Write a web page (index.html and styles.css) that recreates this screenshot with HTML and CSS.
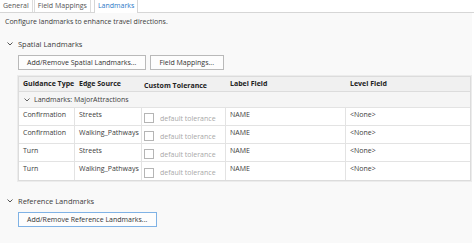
FILE: index.html
```html
<!DOCTYPE html>
<html>
<head>
<meta charset="utf-8">
<link rel="stylesheet" href="styles.css">
</head>
<body>
<div class="tabs">
  <div class="tab">General</div>
  <div class="tab">Field Mappings</div>
  <div class="tab active">Landmarks</div>
</div>
<div class="panel">
  <div class="desc">Configure landmarks to enhance travel directions.</div>
  <div class="section-head">
    <svg class="chev" width="6" height="4" viewBox="0 0 6 4"><polyline points="0.5,0.5 3,3 5.5,0.5" fill="none" stroke="#555" stroke-width="1"/></svg>
    <span>Spatial Landmarks</span>
  </div>
  <div class="btn-row">
    <div class="btn">Add/Remove Spatial Landmarks...</div>
    <div class="btn">Field Mappings...</div>
  </div>
  <div class="table">
    <div class="row head">
      <div class="c c1">Guidance Type</div>
      <div class="c c2">Edge Source</div>
      <div class="c c3">Custom Tolerance</div>
      <div class="c c4">Label Field</div>
      <div class="c c5">Level Field</div>
    </div>
    <div class="group">
      <svg class="chev" width="6" height="4" viewBox="0 0 6 4"><polyline points="0.5,0.5 3,3 5.5,0.5" fill="none" stroke="#666" stroke-width="1"/></svg>
      <span>Landmarks: MajorAttractions</span>
    </div>
    <div class="row">
      <div class="c c1">Confirmation</div>
      <div class="c c2">Streets</div>
      <div class="c c3"><span class="cb"></span><span class="tol">default tolerance</span></div>
      <div class="c c4">NAME</div>
      <div class="c c5">&lt;None&gt;</div>
    </div>
    <div class="row">
      <div class="c c1">Confirmation</div>
      <div class="c c2">Walking_Pathways</div>
      <div class="c c3"><span class="cb"></span><span class="tol">default tolerance</span></div>
      <div class="c c4">NAME</div>
      <div class="c c5">&lt;None&gt;</div>
    </div>
    <div class="row">
      <div class="c c1">Turn</div>
      <div class="c c2">Streets</div>
      <div class="c c3"><span class="cb"></span><span class="tol">default tolerance</span></div>
      <div class="c c4">NAME</div>
      <div class="c c5">&lt;None&gt;</div>
    </div>
    <div class="row last">
      <div class="c c1">Turn</div>
      <div class="c c2">Walking_Pathways</div>
      <div class="c c3"><span class="cb"></span><span class="tol">default tolerance</span></div>
      <div class="c c4">NAME</div>
      <div class="c c5">&lt;None&gt;</div>
    </div>
  </div>
  <div class="section-head ref">
    <svg class="chev" width="6" height="4" viewBox="0 0 6 4"><polyline points="0.5,0.5 3,3 5.5,0.5" fill="none" stroke="#555" stroke-width="1"/></svg>
    <span>Reference Landmarks</span>
  </div>
  <div class="btn-row">
    <div class="btn focus">Add/Remove Reference Landmarks...</div>
  </div>
</div>
</body>
</html>
```
FILE: styles.css
```css
html, body {
  margin: 0;
  padding: 0;
  background: #ffffff;
}
body {
  width: 474px;
  height: 248px;
  overflow: hidden;
  font-family: "Open Sans", "Noto Sans", sans-serif;
  font-size: 7px;
  color: #3c3c3c;
}
.tabs {
  display: flex;
  height: 12px;
  border-bottom: 1px solid #d6d6d6;
  background: #ffffff;
}
.tab {
  padding: 0 3px;
  line-height: 12px;
  border-right: 1px solid #dcdcdc;
  color: #555;
}
.tab:nth-child(2) {
  margin-left: 1px;
  border-left: 1px solid #dcdcdc;
}
.tab.active {
  margin-left: 3px;
  color: #2a78c6;
  background: #ffffff;
  border-left: 1px solid #d6d6d6;
  border-right: 1px solid #d6d6d6;
  margin-bottom: -1px;
}
.panel {
  width: 472px;
  height: 230px;
  background: #f9f9f9;
  display: flex;
  flex-direction: column;
}
.desc {
  margin: 4px 0 0 5px;
  line-height: 10px;
}
.section-head {
  display: flex;
  align-items: center;
  margin: 12px 0 0 7px;
  height: 10px;
  font-size: 7.5px;
}
.section-head .chev {
  margin-right: 5px;
}
.section-head.ref {
  margin-top: 15px;
}
.btn-row {
  display: flex;
  gap: 4px;
  margin: 6px 0 0 18px;
}
.btn {
  height: 13px;
  line-height: 13px;
  padding: 0 9px 0 8px;
  border: 1px solid #b9b9b9;
  background: #fdfdfd;
  color: #333;
}
.btn.focus {
  border-color: #7fb2e5;
}
.table {
  margin: 6px 0 0 18px;
  width: 451px;
  border: 1px solid #dcdcdc;
  background: #ffffff;
  box-shadow: 0 0 0 1px #ececec;
}
.row {
  display: flex;
  height: 17px;
  border-bottom: 1px solid #e3e3e3;
}
.row.last {
  border-bottom: none;
  height: 18px;
}
.row.head {
  height: 14px;
  background: #f0f0f0;
  font-weight: 700;
  color: #222;
  border-bottom: 1px solid #dcdcdc;
}
.row.head .c {
  line-height: 14px;
  border-right: none;
}
.c {
  box-sizing: border-box;
  padding-left: 4px;
  line-height: 13px;
  border-right: 1px solid #e3e3e3;
  white-space: nowrap;
  overflow: hidden;
}
.c1 { width: 56px; }
.c2 { width: 67px; }
.c3 { width: 84px; display: flex; align-items: center; padding-left: 2px; padding-top: 3px; }
.c4 { width: 120px; }
.c5 { flex: 1; border-right: none; }
.group {
  display: flex;
  align-items: center;
  height: 15px;
  background: #f5f5f5;
  border-bottom: 1px solid #e3e3e3;
  padding-left: 5px;
}
.group .chev {
  margin-right: 4px;
}
.cb {
  width: 8px;
  height: 8px;
  border: 1px solid #b5b5b5;
  background: #fff;
  margin-right: 6px;
}
.tol {
  color: #a8a8a8;
}
```
